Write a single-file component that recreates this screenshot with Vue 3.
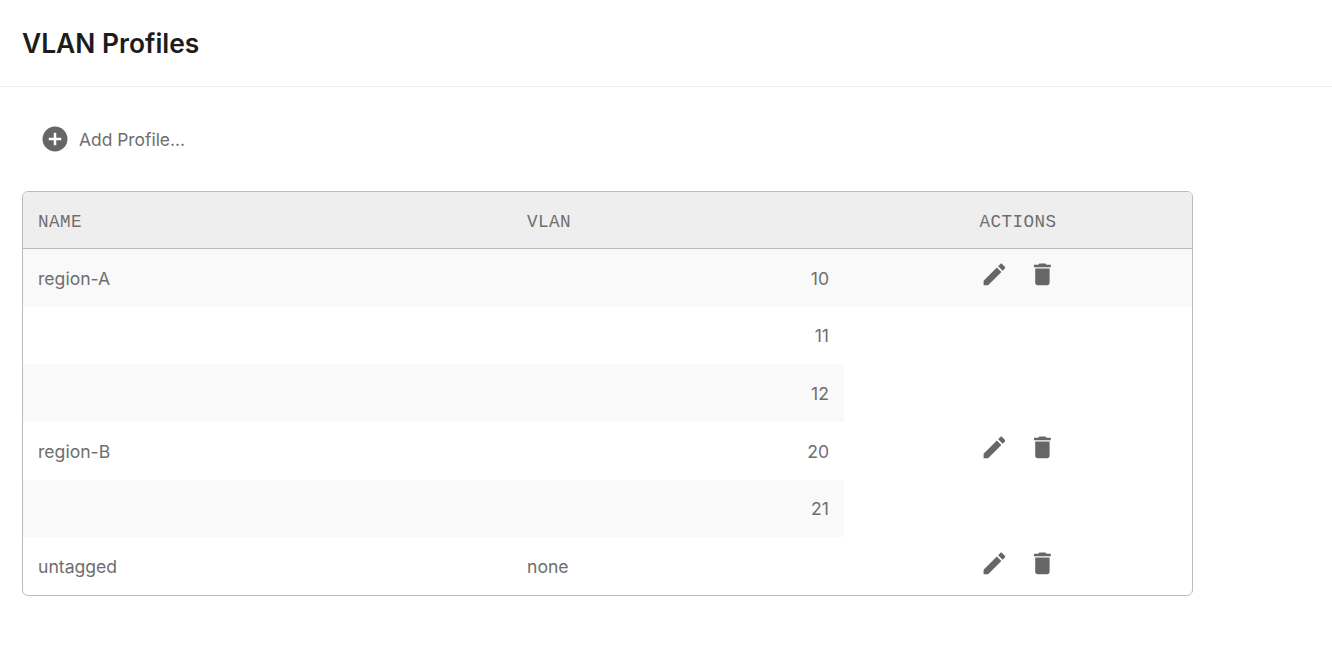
<template>
  <div class="page">
    <header class="top">
      <h1>VLAN Profiles</h1>
    </header>
    <main class="content">
      <button class="add">
        <svg class="add-icon" viewBox="0 0 24 24"><path d="M17,13H13V17H11V13H7V11H11V7H13V11H17M12,2A10,10 0 0,0 2,12A10,10 0 0,0 12,22A10,10 0 0,0 22,12A10,10 0 0,0 12,2Z" /></svg>
        <span>Add Profile...</span>
      </button>
      <div class="table-wrap">
        <table>
          <thead>
            <tr>
              <th class="col-name">NAME</th>
              <th class="col-vlan">VLAN</th>
              <th class="col-actions">ACTIONS</th>
            </tr>
          </thead>
          <tbody>
            <tr v-for="row in rows" :key="row.key">
              <td>{{ row.name }}</td>
              <td :class="{ num: row.vlan !== 'none' }">{{ row.vlan }}</td>
              <td v-if="row.name" class="actions">
                <div class="icons">
                  <svg viewBox="0 0 24 24"><path d="M3 17.25V21h3.75L17.81 9.94l-3.75-3.75L3 17.25zM20.71 7.04c.39-.39.39-1.02 0-1.41l-2.34-2.34c-.39-.39-1.02-.39-1.41 0l-1.83 1.83 3.75 3.75 1.83-1.83z" /></svg>
                  <svg viewBox="0 0 24 24"><path d="M6 19c0 1.1.9 2 2 2h8c1.1 0 2-.9 2-2V7H6v12zM19 4h-3.5l-1-1h-5l-1 1H5v2h14V4z" /></svg>
                </div>
              </td>
            </tr>
          </tbody>
        </table>
      </div>
    </main>
  </div>
</template>

<script setup>
const rows = [
  { key: 1, name: "region-A", vlan: "10" },
  { key: 2, name: "", vlan: "11" },
  { key: 3, name: "", vlan: "12" },
  { key: 4, name: "region-B", vlan: "20" },
  { key: 5, name: "", vlan: "21" },
  { key: 6, name: "untagged", vlan: "none" },
];
</script>

<style scoped>
.page {
  font-family: Inter, "Liberation Sans", sans-serif;
  color: #6e6e6e;
  background: #fff;
}

.top {
  height: 86px;
  border-bottom: 1px solid #eee;
  padding-left: 22px;
  display: flex;
  align-items: center;
}

h1 {
  margin: 0;
  font-size: 26.4px;
  line-height: 82px;
  font-weight: 600;
  color: #1c1c1c;
}

.content {
  padding: 38px 22px 0;
}

.add {
  display: flex;
  align-items: center;
  gap: 12px;
  margin-left: 20px;
  padding: 0;
  border: none;
  background: none;
  font: inherit;
  font-size: 17.4px;
  color: #6e6e6e;
  height: 28px;
}

.add-icon {
  width: 30px;
  height: 30px;
  fill: #666;
  margin-left: -2px;
  margin-right: -3px;
}

.table-wrap {
  margin-top: 38px;
  width: 1169px;
  border: 1px solid #bbb;
  border-radius: 6px;
  overflow: hidden;
}

table {
  width: 100%;
  border-collapse: separate;
  border-spacing: 0;
  table-layout: fixed;
  font-size: 17.6px;
}

th,
td {
  box-sizing: border-box;
  padding: 0 15px;
}

th {
  height: 57px;
  padding-top: 4px;
  background: #eee;
  border-bottom: 1px solid #bbb;
  font-family: "Liberation Mono", monospace;
  font-size: 17.6px;
  font-weight: 400;
  text-align: left;
  letter-spacing: 0.44px;
}

.col-name {
  width: 489px;
}

.col-vlan {
  width: 332px;
}

.col-actions {
  text-align: center;
}

td {
  height: 57.67px;
  padding-top: 1px;
}

tbody tr:nth-child(odd) td {
  background: #f9f9f9;
}

.num {
  text-align: right;
}

.actions {
  vertical-align: top;
  padding-top: 11.4px;
}

.icons {
  display: flex;
  justify-content: center;
  gap: 19.2px;
}

.icons svg {
  display: block;
  width: 28.8px;
  height: 28.8px;
  fill: #666;
}
</style>
